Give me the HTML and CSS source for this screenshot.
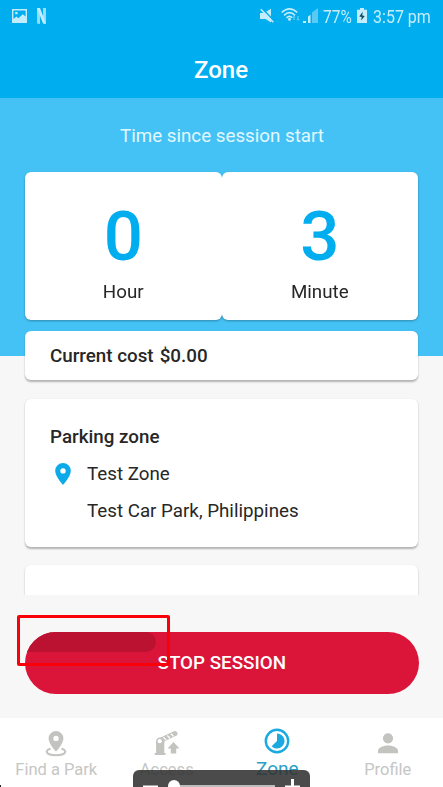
FILE: index.html
```html
<!DOCTYPE html>
<html lang="en">
<head>
<meta charset="utf-8">
<title>Zone</title>
<link rel="stylesheet" href="styles.css">
</head>
<body>
<div class="app">
  <header class="header">
    <div class="status">
      <svg class="st-photo" width="15" height="14" viewBox="0 0 15 14"><path fill-rule="evenodd" d="M0 0h15v14H0zM1.400 1.400v8.700l3-2.600 2 1.700 4.400-4 2.800 2.400V1.400zM3.200 3h2.400v2.300H3.200z"/></svg>
      <svg class="st-n" width="9" height="16" viewBox="0 0 9 16"><path d="M0 0h3v16l-3-.5zM6 0h3v15.500l-3-1z" opacity=".75"/><path d="M0 0h3l6 16-3-.5z"/></svg>
      <span class="spacer"></span>
      <svg class="st-mute" width="15" height="16" viewBox="0 0 15 16"><path d="M0 5h4L11 .8v13.700L5.500 11H0z"/><path d="M2 .3l12 12.500" stroke="#00adef" stroke-width="1.600"/><path d="M.8 1.200l12.500 13" stroke="#c4edfb" stroke-width="1.600"/></svg>
      <svg class="st-wifi" width="20" height="15" viewBox="0 0 20 15"><g fill="none" stroke="#c4edfb" stroke-width="1.600"><path d="M.7 4.500Q8.500-2.700 16.300 4.500M3 7.300Q8.500 2 14 7.300M5.500 9.800Q8.500 7 11.300 9.800"/></g><circle cx="8.500" cy="11.200" r="1.500"/><path d="M12.300 12V9.500h-1L13 7.400l1.700 2.100h-1V12zM16.300 8v3h-1l1.700 2 1.700-2h-1V8z" opacity=".45"/></svg>
      <svg class="st-signal" width="15" height="15" viewBox="0 0 15 15"><path d="M0 13h3v2H0zM5 8.500l2.500-1.800V15H5z"/><path d="M9 4.500L15 0v15H9z" opacity=".45"/></svg>
      <span class="st-text pct">77%</span>
      <svg class="st-batt" width="10" height="15" viewBox="0 0 10 15"><path d="M3 0h4v1.700h3V15H0V1.700h3z"/><path d="M5.700 3.800L2.300 8.500l2.400.5-.6 3.500L7.800 8l-2.500-.5z" fill="#164b64"/></svg>
      <span class="st-text clock">3:57 pm</span>
    </div>
    <h1 class="title">Zone</h1>
  </header>

  <main class="content">
    <p class="caption">Time since session start</p>
    <section class="timer">
      <div class="card unit"><span class="num">0</span><span class="label">Hour</span></div>
      <div class="card unit"><span class="num">3</span><span class="label">Minute</span></div>
    </section>
    <section class="card cost"><span>Current cost</span> <span>$0.00</span></section>
    <section class="card zone">
      <h2 class="zone-title">Parking zone</h2>
      <div class="zone-row">
        <svg class="pin" width="16" height="22" viewBox="0 0 16 22"><path fill-rule="evenodd" d="M8 0a7.800 7.800 0 0 0-7.800 7.800C.2 13.600 8 22 8 22s7.800-8.400 7.800-14.200A7.800 7.800 0 0 0 8 0zm0 5.200a2.700 2.700 0 1 1 0 5.400 2.700 2.700 0 0 1 0-5.400z"/></svg>
        <span>Test Zone</span>
      </div>
      <div class="zone-row address">Test Car Park, Philippines</div>
    </section>
    <div class="peek"><div class="card peek-card"></div></div>
    <button class="stop"><span class="stop-shade"></span><span class="stop-label">STOP SESSION</span></button>
  </main>

  <nav class="tabs">
    <a class="tab">
      <svg width="22" height="28" viewBox="0 0 22 28"><path fill-rule="evenodd" d="M11 1a7.400 7.400 0 0 0-7.400 7.400C3.600 13.800 11 21.500 11 21.500s7.400-7.700 7.400-13.100A7.400 7.400 0 0 0 11 1zm0 4.700a2.700 2.700 0 1 1 0 5.400 2.700 2.700 0 0 1 0-5.400z"/><path d="M5.500 18.700C-.5 20.200.3 25.200 11 25.200s11.500-5 5.500-6.500" fill="none" stroke="#c3c3bf" stroke-width="2.100"/></svg>
      <span>Find a Park</span>
    </a>
    <a class="tab">
      <svg width="26" height="28" viewBox="0 0 26 28"><path d="M.7 25v-2h1.400V11h8.200v12h1.200v2z"/><circle cx="6.200" cy="11.500" r="4.100"/><path d="M6.200 10.500L21 3.500" stroke="#c3c3bf" stroke-width="5" stroke-linecap="round"/><circle cx="5.700" cy="11.200" r="2.100" fill="#fff"/><path d="M9.500 7.200l2.600 2.700M13.300 5.500l2.600 2.700M17 3.700l2.600 2.700" stroke="#fff" stroke-width="1.300"/><path d="M19.500 12l6 6.500h-3.300v5h-5.400v-5h-3.300z"/></svg>
      <span>Access</span>
    </a>
    <a class="tab active">
      <svg width="26" height="26" viewBox="0 0 26 26"><circle cx="13" cy="13" r="11.200" fill="none" stroke="#1aa9e1" stroke-width="2.400"/><path d="M13 5.500a7.500 7.500 0 1 1-5.300 12.800L13 13z"/></svg>
      <span>Zone</span>
    </a>
    <a class="tab">
      <svg width="22" height="28" viewBox="0 0 22 28"><circle cx="11" cy="8.300" r="5.100"/><path d="M1 23.300v-2.500c0-3.500 6.500-5.200 10-5.200s10 1.700 10 5.200v2.500z"/></svg>
      <span>Profile</span>
    </a>
  </nav>
</div>

<div class="highlight"></div>
<div class="zoombar">
  <svg width="177" height="17" viewBox="0 0 177 17"><path d="M41 15h101v2H41z" fill="#bdbdbd"/><path d="M10 15.500h15v1.500H10zM158 9h3v6.500h6v1.500h-15v-1.500h6z" fill="#fff"/><circle cx="41" cy="16" r="6" fill="#fff"/></svg>
</div>
<div class="corner"></div>
</body>
</html>
```
FILE: styles.css
```css
* { box-sizing: border-box; margin: 0; padding: 0; }
html, body { width: 443px; height: 787px; overflow: hidden; }
body { position: relative; font-family: Roboto, "Liberation Sans", sans-serif; color: #272727; background: #f7f7f7; }
svg { display: block; flex: none; }

.app { display: flex; flex-direction: column; height: 787px; }

.header { height: 98px; background: #00adef; }
.status { display: flex; height: 32px; padding: 0 0 0 12px; fill: #c4edfb; align-items: flex-start; }
.st-photo { margin-top: 9px; }
.st-n { margin: 8px 0 0 10px; }
.spacer { flex: 1; }
.st-mute { margin: 8px 6px 0 0; }
.st-wifi { margin: 8px 2px 0 0; }
.st-signal { margin: 8px 5px 0 0; }
.st-batt { margin: 8px 6px 0 0; }
.st-text { height: 32px; line-height: 33px; font-size: 18px; color: #c4edfb; white-space: nowrap; transform-origin: left center; }
.pct { width: 34px; transform: scaleX(.86); }
.clock { width: 70px; transform: scaleX(.89); }
.title { margin-top: 18px; line-height: 40px; text-align: center; font-size: 24px; font-weight: 500; color: #fff; text-indent: -1px; }

.content { height: 620px; padding: 20px 25px 0; background: linear-gradient(#44c2f5 258px, #f7f7f7 258px); }
.caption { line-height: 37px; text-align: center; font-size: 18.750px; color: #e2f8ff; text-indent: 1px; }
.card { background: #fff; border-radius: 6px; box-shadow: 0 1.500px 2px rgba(0, 0, 0, .28); }
.timer { display: flex; height: 147.500px; margin-top: 17.400px; filter: drop-shadow(0 1px 1px rgba(0, 0, 0, .3)); }
.unit { flex: 1; display: flex; flex-direction: column; align-items: center; padding-top: 25px; box-shadow: none; }
.num { line-height: 80px; font-size: 69px; font-weight: 500; color: #00adef; }
.label { margin-top: 3px; line-height: 24px; font-size: 18.750px; }
.cost { display: flex; gap: 6px; align-items: center; height: 49px; margin-top: 11.500px; padding: 0 25px; font-size: 18.800px; font-weight: 500; }
.zone { height: 148px; margin-top: 18.600px; padding: 20px 25px 0; font-size: 18.750px; }
.zone-title { line-height: 37px; font-size: 18.800px; font-weight: 500; }
.zone-row { display: flex; align-items: center; height: 37px; }
.pin { margin: 0 16px 0 5px; fill: #0caae9; }
.address { padding-left: 37px; }
.peek { height: 34px; margin: 14.500px -4px 0; padding: 4px 4px 0; overflow: hidden; }
.peek-card { height: 60px; }
.stop { position: relative; display: block; width: 393.500px; height: 62px; margin-top: 36.500px; border: 0; border-radius: 31px; overflow: hidden; background: #db143a; color: #fff; font: 500 18.800px/63px Roboto, sans-serif; }
.stop-shade { position: absolute; left: 0; top: 0; width: 131px; height: 20.500px; border-radius: 0 10px 10px 0; background: #bb1232; }
.stop-label { position: relative; }

.tabs { display: grid; grid-template-columns: repeat(4, 1fr); height: 69px; padding-left: 1px; background: #fff; }
.tab { display: flex; flex-direction: column; align-items: center; padding-top: 12px; font-size: 16.500px; line-height: 24px; color: #c6c6c4; fill: #c3c3bf; }
.active { padding-top: 10px; font-size: 19px; color: #2ba0c6; fill: #1aa9e1; }
.active span { line-height: 30px; }

.highlight { position: absolute; left: 17px; top: 615px; width: 153px; height: 51px; border: 3px solid #fa0008; border-radius: 2px; }
.zoombar { position: absolute; left: 133px; top: 770px; width: 177px; height: 17px; border-radius: 6px 6px 0 0; background: rgba(48, 48, 48, .87); }
.corner { position: absolute; left: 0; top: 785px; width: 1px; height: 2px; background: #222; }
```
